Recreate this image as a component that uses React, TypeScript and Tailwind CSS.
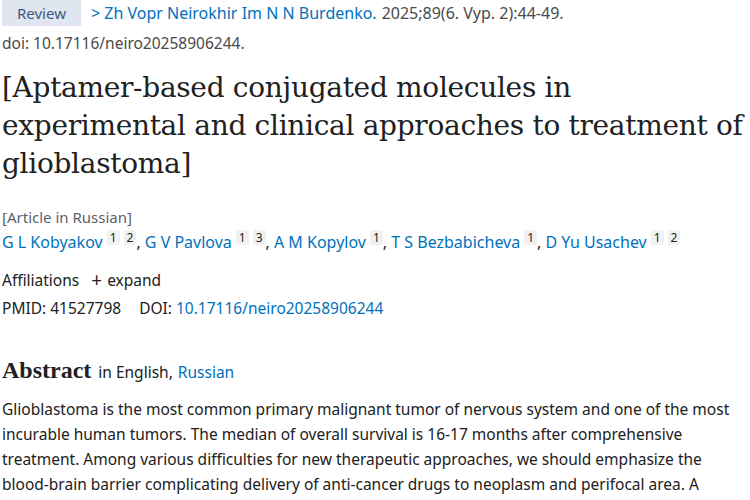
import React from 'react';

const Sup = ({ n }: { n: string }) => (
  <span className="ml-[4px] inline-block rounded-[2px] bg-[#f1f1f1] px-[3px] align-[6px] text-[12px] leading-[15px] text-[#212121]">
    {n}
  </span>
);

const authors: { name: string; refs: string[] }[] = [
  { name: 'G L Kobyakov', refs: ['1', '2'] },
  { name: 'G V Pavlova', refs: ['1', '3'] },
  { name: 'A M Kopylov', refs: ['1'] },
  { name: 'T S Bezbabicheva', refs: ['1'] },
  { name: 'D Yu Usachev', refs: ['1', '2'] },
];

export default function App() {
  return (
    <div className="h-[500px] w-[750px] overflow-hidden bg-white pl-[2px] font-['Noto_Sans',sans-serif] text-[#212121]">
      <div className="flex items-center text-[16px] leading-[26px]">
        <span className="bg-[#dfe6f0] px-[15px] text-[15px] text-[#3b5a80]">Review</span>
        <span className="ml-[10px] text-[#0071bc]">&gt; Zh Vopr Neirokhir Im N N Burdenko.</span>
        <span className="ml-[5px] text-[#4a4a4a]">2025;89(6. Vyp. 2):44-49.</span>
      </div>
      <div className="mt-[4px] text-[15.5px] leading-[26px] text-[#4a4a4a]">doi: 10.17116/neiro20258906244.</div>

      <h1 className="mt-[13px] font-['DejaVu_Serif',serif] text-[28px] leading-[38px] tracking-[-0.3px] text-[#212121]">
        [Aptamer-based conjugated molecules in experimental and clinical approaches to treatment of glioblastoma]
      </h1>

      <div className="mt-[24px] text-[15px] leading-[20px] text-[#5b616b]">[Article in Russian]</div>
      <div className="mt-[2px] text-[16px] leading-[26px] text-[#0071bc]">
        {authors.map((a, i) => (
          <span key={a.name}>
            {a.name}
            {a.refs.map((r) => (
              <Sup key={r} n={r} />
            ))}
            {i < authors.length - 1 && <span className="text-[#212121]">, </span>}
          </span>
        ))}
      </div>

      <div className="mt-[12px] flex items-center text-[15.5px] leading-[26px]">
        <span>Affiliations</span>
        <span className="ml-[12px] text-[19px] leading-none">+</span>
        <span className="ml-[5px]">expand</span>
      </div>
      <div className="mt-[2px] text-[15.5px] leading-[26px]">
        <span>PMID: 41527798</span>
        <span className="ml-[18px]">DOI: </span>
        <span className="text-[#0071bc]">10.17116/neiro20258906244</span>
      </div>

      <div className="mt-[34px] flex items-baseline">
        <h2 className="font-['Liberation_Serif',serif] text-[24px] font-bold leading-[30px]">Abstract</h2>
        <span className="ml-[7px] text-[15.5px]">in English,</span>
        <span className="ml-[5px] text-[15.5px] text-[#0071bc]">Russian</span>
      </div>
      <p className="mt-[12px] text-[15.5px] leading-[25px] text-[#212121]">
        Glioblastoma is the most common primary malignant tumor of nervous system and one of the most incurable human
        tumors. The median of overall survival is 16-17 months after comprehensive treatment. Among various difficulties
        for new therapeutic approaches, we should emphasize the blood-brain barrier complicating delivery of anti-cancer
        drugs to neoplasm and perifocal area. A
      </p>
    </div>
  );
}
